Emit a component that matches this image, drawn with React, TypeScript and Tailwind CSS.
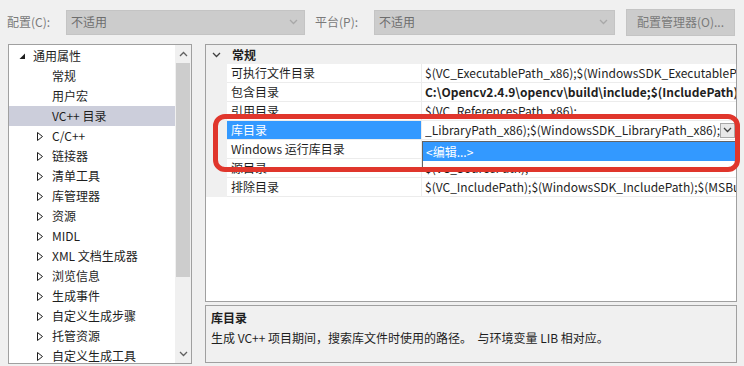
import React from "react";

const font = "font-['Noto_Sans_CJK_SC','Noto_Sans',sans-serif]";

type TreeItem = { label: string; kind: "root" | "leaf" | "closed"; selected?: boolean };

const treeItems: TreeItem[] = [
  { label: "通用属性", kind: "root" },
  { label: "常规", kind: "leaf" },
  { label: "用户宏", kind: "leaf" },
  { label: "VC++ 目录", kind: "leaf", selected: true },
  { label: "C/C++", kind: "closed" },
  { label: "链接器", kind: "closed" },
  { label: "清单工具", kind: "closed" },
  { label: "库管理器", kind: "closed" },
  { label: "资源", kind: "closed" },
  { label: "MIDL", kind: "closed" },
  { label: "XML 文档生成器", kind: "closed" },
  { label: "浏览信息", kind: "closed" },
  { label: "生成事件", kind: "closed" },
  { label: "自定义生成步骤", kind: "closed" },
  { label: "托管资源", kind: "closed" },
  { label: "自定义生成工具", kind: "closed" },
];

// the Windows row value sits under the open dropdown, so it is left blank
const props = [
  { name: "可执行文件目录", value: "$(VC_ExecutablePath_x86);$(WindowsSDK_ExecutablePath_x86);$(NETFXKitsDir)Bin\\NETFX 4.6 Tools" },
  { name: "包含目录", value: "C:\\Opencv2.4.9\\opencv\\build\\include;$(IncludePath)", bold: true },
  { name: "引用目录", value: "$(VC_ReferencesPath_x86);" },
  { name: "库目录", value: "_LibraryPath_x86);$(WindowsSDK_LibraryPath_x86);", editing: true },
  { name: "Windows 运行库目录", value: "" },
  { name: "源目录", value: "$(VC_SourcePath);" },
  { name: "排除目录", value: "$(VC_IncludePath);$(WindowsSDK_IncludePath);$(MSBuild_ExecutablePath);$(VC_LibraryPath_x86);" },
];

function Chevron({ up = false, className = "" }: { up?: boolean; className?: string }) {
  return (
    <svg width="9" height="6" viewBox="0 0 9 6" className={className}>
      <polyline
        points={up ? "1,5 4.5,1.5 8,5" : "1,1 4.5,4.5 8,1"}
        fill="none"
        stroke="currentColor"
        strokeWidth="1.3"
      />
    </svg>
  );
}

function Combo({ w }: { w: string }) {
  return (
    <div className={`${w} h-[25px] flex items-center justify-between bg-[#cccccc] border border-[#c4c4c4] pl-[4px] pr-[6px] text-[12px] text-[#6d6d6d]`}>
      <span>不适用</span>
      <Chevron className="text-[#a8a8a8]" />
    </div>
  );
}

export default function App() {
  return (
    <div className={`relative w-[744px] h-[366px] overflow-hidden bg-[#f0f0f0] text-[#1e1e1e] ${font}`}>
      {/* top toolbar */}
      <div className="h-[44px] flex items-center pl-[7px] text-[12px]">
        <span className="w-[59px] text-[#7a7a7a]">配置(C):</span>
        <Combo w="w-[239px]" />
        <span className="ml-[10px] w-[59px] text-[#7a7a7a]">平台(P):</span>
        <Combo w="w-[241px]" />
        <div className="ml-[11px] w-[109px] h-[27px] flex items-center justify-center bg-[#cccccc] border border-[#c4c4c4] text-[#7a7a7a]">
          配置管理器(O)...
        </div>
      </div>

      <div className="flex pl-[8px]">
        {/* tree */}
        <div className="w-[184px] h-[320px] border border-[#a0a0a0] bg-white flex text-[12px]">
          <div className="flex-1 pt-[1px]">
            {treeItems.map((t) => (
              <div
                key={t.label}
                className={`h-[20px] flex items-center ${t.selected ? "bg-[#cccedb]" : ""}`}
              >
                {t.kind === "root" && (
                  <>
                    <svg width="7" height="7" viewBox="0 0 7 7" className="ml-[10px] mr-[7px]">
                      <polygon points="6,0.5 6,6 0.5,6" fill="#1e1e1e" />
                    </svg>
                    <span>{t.label}</span>
                  </>
                )}
                {t.kind === "leaf" && <span className="ml-[43px]">{t.label}</span>}
                {t.kind === "closed" && (
                  <>
                    <svg width="6" height="9" viewBox="0 0 6 9" className="ml-[28px] mr-[9px]">
                      <polygon points="0.5,0.5 5.5,4.5 0.5,8.5" fill="none" stroke="#1e1e1e" strokeWidth="1" />
                    </svg>
                    <span>{t.label}</span>
                  </>
                )}
              </div>
            ))}
          </div>
          <div className="w-[16px] flex flex-col bg-[#f0f0f0]">
            <div className="h-[18px] flex items-center justify-center text-[#606060]">
              <Chevron up />
            </div>
            <div className="h-[214px] mx-[1px] bg-[#cdcdcd]" />
            <div className="flex-1" />
            <div className="h-[18px] flex items-center justify-center text-[#606060]">
              <Chevron />
            </div>
          </div>
        </div>

        <div className="ml-[13px] w-[532px] flex flex-col gap-[3px]">
          {/* property grid */}
          <div className="relative h-[258px] border border-[#a0a0a0] bg-white text-[12px] overflow-hidden">
            <div className="h-[19px] flex items-center bg-[#f0f0f0]">
              <Chevron className="ml-[6px] mr-[11px] text-[#404040]" />
              <span className="font-bold">常规</span>
            </div>
            {props.map((p) => (
              <div key={p.name} className="h-[19px] flex bg-[#f0f0f0]">
                <div className="w-[21px]" />
                <div
                  className={`w-[195px] flex items-center pl-[4px] border-b border-r border-[#ececec] ${
                    p.editing ? "bg-[#3399ff] text-white" : "bg-white"
                  }`}
                >
                  {p.name}
                </div>
                <div className="flex-1 min-w-0 flex items-center bg-white border-b border-[#ececec] pl-[3px]">
                  <span className={`whitespace-nowrap overflow-hidden ${p.bold ? "font-bold" : ""}`}>
                    {p.value}
                  </span>
                  {p.editing && (
                    <div className="ml-auto mr-[1px] w-[15px] h-[15px] shrink-0 flex items-center justify-center bg-[#e8e8e8] border border-[#a8a8a8] text-[#404040]">
                      <Chevron />
                    </div>
                  )}
                </div>
              </div>
            ))}

            {/* dropdown popup */}
            <div className="absolute left-[216px] top-[96px] w-[315px] h-[27px] bg-white border border-[#646464]">
              <div className="h-[19px] flex items-center bg-[#3399ff] text-white pl-[3px]">&lt;编辑...&gt;</div>
            </div>
          </div>

          {/* description */}
          <div className="h-[58px] border border-[#a0a0a0] bg-[#f0f0f0] px-[5px] pt-[2px] text-[12px] leading-[20px]">
            <div className="font-bold">库目录</div>
            <div className="whitespace-pre">生成 VC++ 项目期间，搜索库文件时使用的路径。  与环境变量 LIB 相对应。</div>
          </div>
        </div>
      </div>

      {/* red annotation */}
      <div className="absolute left-[213px] top-[114px] w-[527px] h-[58px] border-[5px] border-[#e0362c] rounded-[12px]" />
    </div>
  );
}
